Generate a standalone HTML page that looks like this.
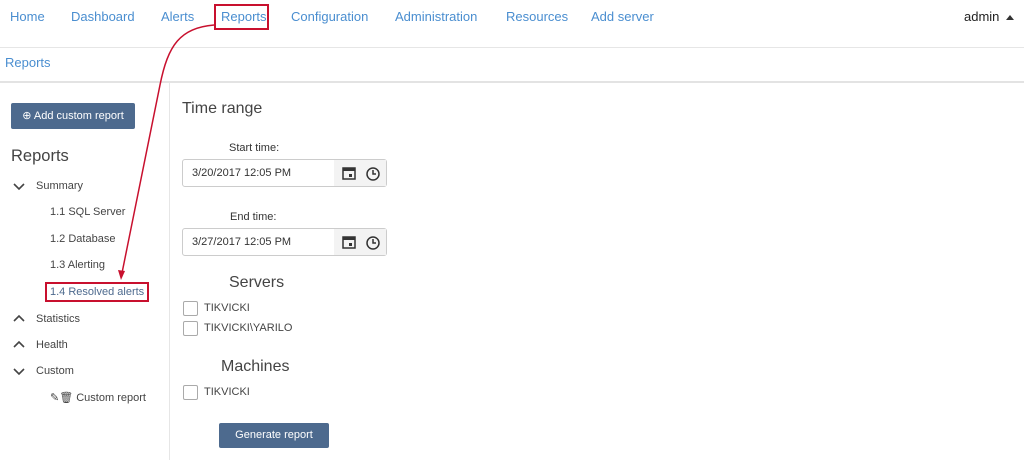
<!DOCTYPE html>
<html><head><style>
*{margin:0;padding:0;box-sizing:border-box}
body{width:1024px;height:460px;background:#fff;font-family:"Liberation Sans",sans-serif;position:relative;overflow:hidden;color:#333}
.a{position:absolute;white-space:nowrap}
.nav{font-size:13px;color:#4a8ed0;top:9px}
.s{font-size:11px;color:#444}
.inp{position:absolute;left:182px;width:205px;height:28px;border:1px solid #ccc;border-radius:3px;background:#fff}
.inp .t{position:absolute;left:9px;top:7px;font-size:11px;color:#333}
.inp .ic{position:absolute;right:0;top:0;width:52px;height:26px;background:#f3f3f3}
.cb{position:absolute;left:183px;width:15px;height:15px;border:1px solid #aaa;border-radius:2px;background:#fff}
.btn{position:absolute;background:#4d6a8e;color:#fff;font-size:11px;border-radius:2px;text-align:center}
</style></head><body>
<div class="a nav" style="left:10px">Home</div>
<div class="a nav" style="left:71px">Dashboard</div>
<div class="a nav" style="left:161px">Alerts</div>
<div class="a nav" style="left:221px">Reports</div>
<div class="a nav" style="left:291px">Configuration</div>
<div class="a nav" style="left:395px">Administration</div>
<div class="a nav" style="left:506px">Resources</div>
<div class="a nav" style="left:591px">Add server</div>
<div class="a" style="left:964px;top:9px;font-size:13px;color:#222">admin</div>
<div class="a" style="left:1006px;top:15px;width:0;height:0;border-left:4px solid transparent;border-right:4px solid transparent;border-bottom:5px solid #333"></div>
<div class="a" style="left:214px;top:4px;width:55px;height:26px;border:2px solid #c8102e"></div>
<div class="a" style="left:0;top:47px;width:1024px;height:1px;background:#e6e6e6"></div>
<div class="a" style="left:5px;top:55px;font-size:13px;color:#4a8ed0">Reports</div>
<div class="a" style="left:0;top:81px;width:1024px;height:2px;background:#e3e3e3"></div>
<div class="a" style="left:169px;top:83px;width:1px;height:377px;background:#e6e6e6"></div>
<div class="btn" style="left:11px;top:103px;width:124px;height:26px;line-height:26px">&#x2295; Add custom report</div>
<div class="a" style="left:11px;top:147px;font-size:16.5px;color:#444">Reports</div>
<div class="a s" style="left:36px;top:180px">Summary</div>
<div class="a s" style="left:50px;top:206px">1.1 SQL Server</div>
<div class="a s" style="left:50px;top:233px">1.2 Database</div>
<div class="a s" style="left:50px;top:259px">1.3 Alerting</div>
<div class="a s" style="left:50px;top:286px;color:#4d6a8e">1.4 Resolved alerts</div>
<div class="a" style="left:45px;top:282px;width:104px;height:20px;border:2px solid #c8102e"></div>
<div class="a s" style="left:36px;top:313px">Statistics</div>
<div class="a s" style="left:36px;top:339px">Health</div>
<div class="a s" style="left:36px;top:365px">Custom</div>
<div class="a s" style="left:50px;top:391px">&#9998;&#x1F5D1; Custom report</div>
<svg class="a" style="left:0;top:0" width="300" height="460">
<path d="M14 184 l5 5 l5 -5 M14 369 l5 5 l5 -5 M14 321 l5 -5 l5 5 M14 347 l5 -5 l5 5" stroke="#444" stroke-width="1.6" fill="none"/>
<path d="M214 25 C180 28 168 45 160 85 L122 273" stroke="#c8102e" stroke-width="1.5" fill="none"/>
<path d="M118 270 L121 280 L125 271 Z" fill="#c8102e"/>
</svg>
<div class="a" style="left:182px;top:100px;font-size:16px;color:#444">Time range</div>
<div class="a s" style="left:229px;top:142px;color:#333">Start time:</div>
<div class="inp" style="top:159px"><div class="t">3/20/2017 12:05 PM</div><div class="ic"></div></div>
<div class="a s" style="left:230px;top:211px;color:#333">End time:</div>
<div class="inp" style="top:228px"><div class="t">3/27/2017 12:05 PM</div><div class="ic"></div></div>
<svg class="a" style="left:335px;top:160px" width="52" height="100">
<g fill="none" stroke="#333" stroke-width="1.5">
<rect x="8" y="8" width="12" height="11"/><circle cx="38" cy="14" r="6"/><path d="M38 10 v4 h3"/>
<rect x="8" y="77" width="12" height="11"/><circle cx="38" cy="83" r="6"/><path d="M38 79 v4 h3"/>
</g><g fill="#333"><rect x="8" y="8" width="12" height="3"/><rect x="14" y="14" width="3" height="3"/>
<rect x="8" y="77" width="12" height="3"/><rect x="14" y="83" width="3" height="3"/></g></svg>
<div class="a" style="left:229px;top:274px;font-size:16px;color:#444">Servers</div>
<div class="cb" style="top:301px"></div><div class="a s" style="left:204px;top:302px">TIKVICKI</div>
<div class="cb" style="top:321px"></div><div class="a s" style="left:204px;top:322px">TIKVICKI\YARILO</div>
<div class="a" style="left:221px;top:358px;font-size:16px;color:#444">Machines</div>
<div class="cb" style="top:385px"></div><div class="a s" style="left:204px;top:386px">TIKVICKI</div>
<div class="btn" style="left:219px;top:423px;width:110px;height:25px;line-height:25px">Generate report</div>
</body></html>
